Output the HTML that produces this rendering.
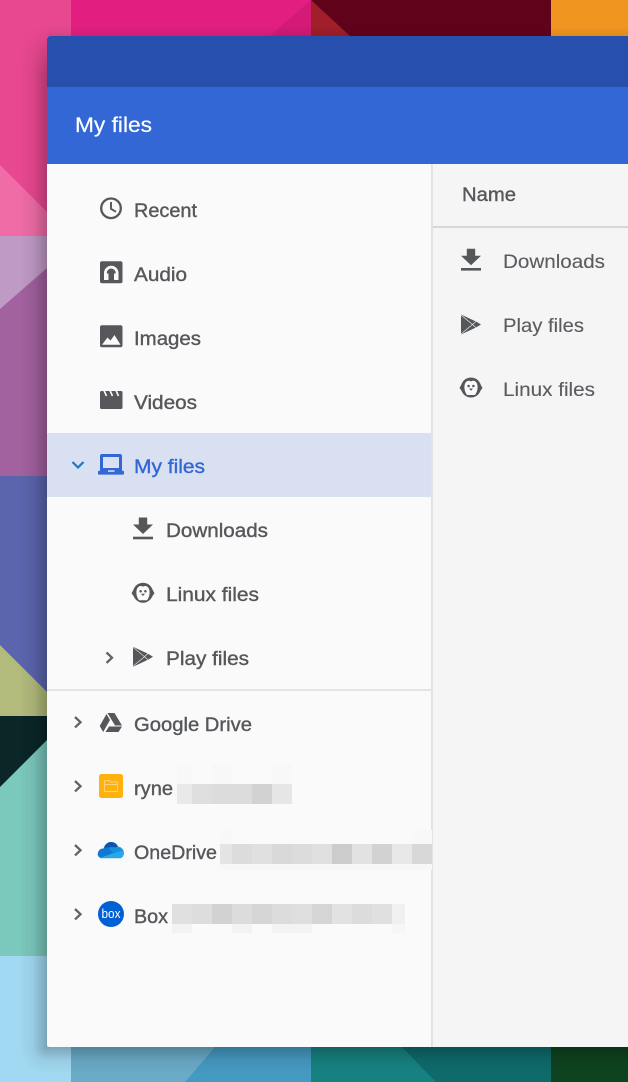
<!DOCTYPE html>
<html lang="en"><head><meta charset="utf-8"><title>My files</title>
<style>
html,body{margin:0;padding:0;background:#fff;width:628px;height:1082px;overflow:hidden}
svg{display:block}
text{font-family:"Liberation Sans",sans-serif;font-size:19.8px;fill:#55575a;stroke:#55575a;stroke-width:.38px}
.m{stroke-width:.12px;fill:#5a5c5f}
</style></head><body>
<svg width="628" height="1082" viewBox="0 0 628 1082" xmlns="http://www.w3.org/2000/svg">
<defs>
<linearGradient id="sl" x1="0" y1="0" x2="1" y2="0"><stop offset="0" stop-color="#000" stop-opacity="0"/><stop offset=".5" stop-color="#000" stop-opacity=".06"/><stop offset="1" stop-color="#000" stop-opacity=".24"/></linearGradient>
<linearGradient id="fade" gradientUnits="userSpaceOnUse" x1="0" y1="28" x2="0" y2="75"><stop offset="0" stop-color="#000"/><stop offset="1" stop-color="#fff"/></linearGradient>
<mask id="lm" maskUnits="userSpaceOnUse" x="0" y="0" width="628" height="1082"><rect x="0" y="0" width="628" height="1082" fill="url(#fade)"/></mask>
<linearGradient id="sb" x1="0" y1="0" x2="0" y2="1"><stop offset="0" stop-color="#000" stop-opacity=".24"/><stop offset=".5" stop-color="#000" stop-opacity=".06"/><stop offset="1" stop-color="#000" stop-opacity="0"/></linearGradient>
<radialGradient id="sc" gradientUnits="userSpaceOnUse" cx="47" cy="1047" r="27"><stop offset="0" stop-color="#000" stop-opacity=".24"/><stop offset=".5" stop-color="#000" stop-opacity=".06"/><stop offset="1" stop-color="#000" stop-opacity="0"/></radialGradient>
<linearGradient id="st" x1="0" y1="1" x2="0" y2="0"><stop offset="0" stop-color="#000" stop-opacity=".08"/><stop offset="1" stop-color="#000" stop-opacity="0"/></linearGradient>
<g id="dl"><path d="M5.800 0h8.400v7h5.800L10 16.500 0 7h5.800z"/><rect x="0" y="19.200" width="20" height="2.600"/></g>
<g id="pl"><path d="M0 0 15 7 20 10 15 13 0 20z"/><path d="M0 .5 11.500 10 0 19.500M11.500 10 15 6.800M11.500 10 15 13.200" fill="none" stroke="#fafafa" stroke-width=".6"/></g>
<g id="px"><circle cx="12" cy="11" r="10" fill="#55575a"/><path d="M3 7 .5 11.500 3.500 15.500zM21 7 23.500 11.500 20.500 15.500z" fill="#55575a"/><path d="M12 5C10.300 3.500 6.500 4 5.600 8.500 5 12 5.800 15.500 8 18.500H16C18.200 15.500 19 12 18.400 8.500 17.500 4 13.700 3.500 12 5z" fill="#fafafa"/><circle cx="9.600" cy="9.500" r="1.250" fill="#55575a"/><circle cx="14.400" cy="9.500" r="1.250" fill="#55575a"/><path d="M10 12h4l-2 2.300z" fill="#55575a"/></g>
<path id="cr" d="M0 0 5.500 5.200 0 10.400" fill="none" stroke="#5f6368" stroke-width="2.300"/>
</defs>

<!-- wallpaper -->
<rect width="71" height="236" fill="#e84890"/>
<path d="M0 165 71 236H0z" fill="#ef6ca6"/>
<rect x="71" width="240" height="236" fill="#e21f80"/>
<path d="M311 0 270 36H311z" fill="#d41a76"/>
<rect x="311" width="240" height="236" fill="#60031a"/>
<path d="M311 0 350 36H311z" fill="#a01f2a"/>
<rect x="551" width="77" height="236" fill="#f09520"/>
<rect y="236" width="71" height="240" fill="#a2619f"/>
<path d="M0 236H71V247L0 309z" fill="#bf9ac5"/>
<rect y="476" width="71" height="240" fill="#5b65ad"/>
<path d="M0 645 71 716H0z" fill="#b2ba7c"/>
<rect y="716" width="71" height="240" fill="#7bc8bd"/>
<path d="M0 716H71L0 787z" fill="#0a2626"/>
<rect y="956" width="71" height="126" fill="#a1d9f2"/>
<rect x="71" y="1040" width="240" height="42" fill="#6aabc8"/>
<path d="M221 1040 185 1082H311V1040z" fill="#459ac2"/>
<rect x="311" y="1040" width="240" height="42" fill="#178181"/>
<path d="M395 1040 436 1082H551V1040z" fill="#0f6a6a"/>
<rect x="551" y="1040" width="77" height="42" fill="#0d431f"/>

<!-- shadow -->
<rect x="20" y="28" width="27" height="1019" fill="url(#sl)" mask="url(#lm)"/>
<rect x="47" y="1047" width="581" height="27" fill="url(#sb)"/>
<path d="M47 1047H20A27 27 0 0 0 47 1074z" fill="url(#sc)"/>
<rect x="47" y="26" width="581" height="10" fill="url(#st)"/>

<!-- window -->
<rect x="47" y="36" width="640" height="1011" rx="3" fill="#fafafa"/>
<path d="M47 87V39a3 3 0 0 1 3-3H628V87z" fill="#2750ae"/>
<rect x="47" y="87" width="581" height="77" fill="#3367d6"/>
<rect x="433" y="164" width="195" height="883" fill="#f5f5f5"/>
<rect x="431" y="164" width="2" height="883" fill="#e2e2e2"/>
<rect x="433" y="226" width="195" height="2" fill="#d6d6d6"/>
<rect x="47" y="433" width="384" height="64" fill="#d8e0f2"/>
<rect x="47" y="689" width="384" height="2" fill="#e4e4e4"/>

<text x="75" y="132" style="font-size:21.5px;fill:#fff;stroke:#fff;stroke-width:.2px" textLength="77" lengthAdjust="spacingAndGlyphs">My files</text>
<text x="462" y="201" textLength="54" lengthAdjust="spacingAndGlyphs">Name</text>

<!-- sidebar labels -->
<text x="134" y="217" textLength="63" lengthAdjust="spacingAndGlyphs">Recent</text>
<text x="134" y="281" textLength="53" lengthAdjust="spacingAndGlyphs">Audio</text>
<text x="134" y="345" textLength="67" lengthAdjust="spacingAndGlyphs">Images</text>
<text x="134" y="409" textLength="63" lengthAdjust="spacingAndGlyphs">Videos</text>
<text x="134" y="473" style="fill:#3367d6;stroke:#3367d6" textLength="71" lengthAdjust="spacingAndGlyphs">My files</text>
<text x="166" y="537" textLength="102" lengthAdjust="spacingAndGlyphs">Downloads</text>
<text x="166" y="601" textLength="93" lengthAdjust="spacingAndGlyphs">Linux files</text>
<text x="166" y="665" textLength="83" lengthAdjust="spacingAndGlyphs">Play files</text>
<text x="134" y="731" textLength="118" lengthAdjust="spacingAndGlyphs">Google Drive</text>
<text x="134" y="795" textLength="39" lengthAdjust="spacingAndGlyphs">ryne</text>
<text x="134" y="859" textLength="83" lengthAdjust="spacingAndGlyphs">OneDrive</text>
<text x="134" y="923" textLength="34" lengthAdjust="spacingAndGlyphs">Box</text>

<!-- main list -->
<text class="m" x="503" y="268" textLength="102" lengthAdjust="spacingAndGlyphs">Downloads</text>
<text class="m" x="503" y="332" textLength="81" lengthAdjust="spacingAndGlyphs">Play files</text>
<text class="m" x="503" y="396" textLength="92" lengthAdjust="spacingAndGlyphs">Linux files</text>

<!-- sidebar icons -->
<g fill="#55575a">
<circle cx="111" cy="208.300" r="9.800" fill="none" stroke="#55575a" stroke-width="2.300"/>
<path d="M111 202V208.800L116 211.800" fill="none" stroke="#55575a" stroke-width="1.900"/>
<rect x="100" y="261.300" width="22.500" height="22" rx="2"/>
<path d="M104 280v-7a7.250 7.250 0 0 1 14.500 0v7h-4.500v-6.500h1.700v-.5a4.450 4.450 0 0 0-8.900 0v.5h1.700v6.500z" fill="#fafafa"/>
<rect x="100" y="325.300" width="22.500" height="22" rx="2"/>
<path d="M102 344.800 107.500 337.500 110.500 340.500 114.500 335 120.500 344.800z" fill="#fafafa"/>
<path d="M100 392.500a1.500 1.500 0 0 1 1.500-1.500h19.500a1.500 1.500 0 0 1 1.500 1.500V407.500a1.500 1.500 0 0 1-1.500 1.500h-19.500a1.500 1.500 0 0 1-1.500-1.500z"/>
<path d="M104 390.500 106.500 396M110 390.500 112.500 396M116 390.500 118.500 396" fill="none" stroke="#fafafa" stroke-width="1.600"/>
<use href="#dl" x="133" y="517.500"/>
<use href="#px" x="131" y="581.700"/>
<use href="#pl" x="133" y="646.700"/>
<path d="M106.500 714 99.700 726 103.200 732 110 720z"/>
<path d="M107.500 713H114.500L122 725.500H115z"/>
<path d="M109 726.500H122L118.500 732H105.500z"/>
<use href="#dl" x="461" y="248.800"/>
<use href="#pl" x="461" y="314.500"/>
<use href="#px" x="459" y="376.500"/>
</g>

<!-- my files laptop -->
<path d="M102 454h18a2 2 0 0 1 2 2v15h-22v-15a2 2 0 0 1 2-2z" fill="#3367d6"/>
<rect x="103" y="457" width="16" height="11" fill="#d8e0f2"/>
<rect x="98" y="470.800" width="26" height="3.800" rx="1" fill="#3367d6"/>
<rect x="108" y="470.300" width="6.500" height="1.500" fill="#d8e0f2"/>
<path d="M72.500 462 78 467.500 83.500 462" fill="none" stroke="#1f78c0" stroke-width="2.200"/>

<!-- chevrons -->
<use href="#cr" x="106.500" y="652.500"/>
<use href="#cr" x="75" y="717"/>
<use href="#cr" x="75" y="781"/>
<use href="#cr" x="75" y="845"/>
<use href="#cr" x="75" y="909"/>

<!-- folder -->
<rect x="99" y="774" width="24" height="24" rx="2.500" fill="#ffb110"/>
<path d="M105.500 780.500h3.500l1.500 1.500h6a1 1 0 0 1 1 1v7.500a1 1 0 0 1-1 1h-11a1 1 0 0 1-1-1v-9a1 1 0 0 1 1-1zM104.500 784.500h13" fill="none" stroke="#ffd373" stroke-width="1"/>

<!-- onedrive -->
<path d="M98 853.500c0-3 2.500-5 5.500-5 1.500-4 4-6.500 7.500-6.500 3 0 5.500 1.500 7 4.500 3 0 6 3 6 6.500 0 3-2 5.300-4 5.300h-18c-3 0-4.500-2.200-4.500-4.800z" fill="#28a8ea"/>
<path d="M98 853.500c0-3 2.500-5 5.500-5 1.500-4 4-6.500 7.500-6.500l7 9.500-8 2.800-8.500 3.200c-2.500-.3-3.500-2-3.500-4z" fill="#0f78d4"/>
<path d="M104 847.500c1.500-3.500 4-5.500 7-5.500 3 0 5.500 1.500 7 4.500l-6 2.500-3-1.500z" fill="#0a56a8"/>
<path d="M109 847.500 111 847l7 .5c2 .3 4 1.500 5 3.500l-11 1.500z" fill="#1490df"/>

<!-- box -->
<circle cx="111" cy="914" r="13" fill="#0061d5"/>
<text x="101.500" y="918" style="font-size:12.5px;fill:#fff;stroke:none" textLength="19" lengthAdjust="spacingAndGlyphs">box</text>

<!-- pixelation -->
<g fill="#f8f8f8">
<rect x="177" y="764" width="15" height="20"/><rect x="212" y="764" width="20" height="20"/><rect x="272" y="764" width="20" height="20"/>
<rect x="220" y="830" width="12" height="14"/><rect x="412" y="830" width="20" height="14"/>
<rect x="220" y="864" width="212" height="6" fill="#f7f7f7"/>
<rect x="172" y="924" width="20" height="9" fill="#f3f3f3"/><rect x="232" y="924" width="20" height="9" fill="#f3f3f3"/><rect x="272" y="924" width="40" height="9" fill="#f3f3f3"/><rect x="392" y="924" width="13" height="9" fill="#f6f6f6"/>
</g>
<rect x="177" y="784" width="15" height="20" fill="#e9e9e9"/><rect x="192" y="784" width="20" height="20" fill="#dedede"/><rect x="212" y="784" width="40" height="20" fill="#dcdcdc"/><rect x="252" y="784" width="20" height="20" fill="#d2d2d2"/><rect x="272" y="784" width="20" height="20" fill="#e6e6e6"/>
<rect x="220" y="844" width="12" height="20" fill="#e4e4e4"/><rect x="232" y="844" width="20" height="20" fill="#dcdcdc"/><rect x="252" y="844" width="20" height="20" fill="#e0e0e0"/><rect x="272" y="844" width="20" height="20" fill="#d9d9d9"/><rect x="292" y="844" width="20" height="20" fill="#dcdcdc"/><rect x="312" y="844" width="20" height="20" fill="#e0e0e0"/><rect x="332" y="844" width="20" height="20" fill="#cccccc"/><rect x="352" y="844" width="20" height="20" fill="#e2e2e2"/><rect x="372" y="844" width="20" height="20" fill="#d2d2d2"/><rect x="392" y="844" width="20" height="20" fill="#e8e8e8"/><rect x="412" y="844" width="20" height="20" fill="#d8d8d8"/>
<rect x="172" y="904" width="20" height="20" fill="#e0e0e0"/><rect x="192" y="904" width="20" height="20" fill="#dddddd"/><rect x="212" y="904" width="20" height="20" fill="#d2d2d2"/><rect x="232" y="904" width="20" height="20" fill="#dcdcdc"/><rect x="252" y="904" width="20" height="20" fill="#d5d5d5"/><rect x="272" y="904" width="20" height="20" fill="#dcdcdc"/><rect x="292" y="904" width="20" height="20" fill="#dedede"/><rect x="312" y="904" width="20" height="20" fill="#d5d5d5"/><rect x="332" y="904" width="20" height="20" fill="#e2e2e2"/><rect x="352" y="904" width="20" height="20" fill="#dcdcdc"/><rect x="372" y="904" width="20" height="20" fill="#e0e0e0"/><rect x="392" y="904" width="13" height="20" fill="#f0f0f0"/>
</svg>
</body></html>
